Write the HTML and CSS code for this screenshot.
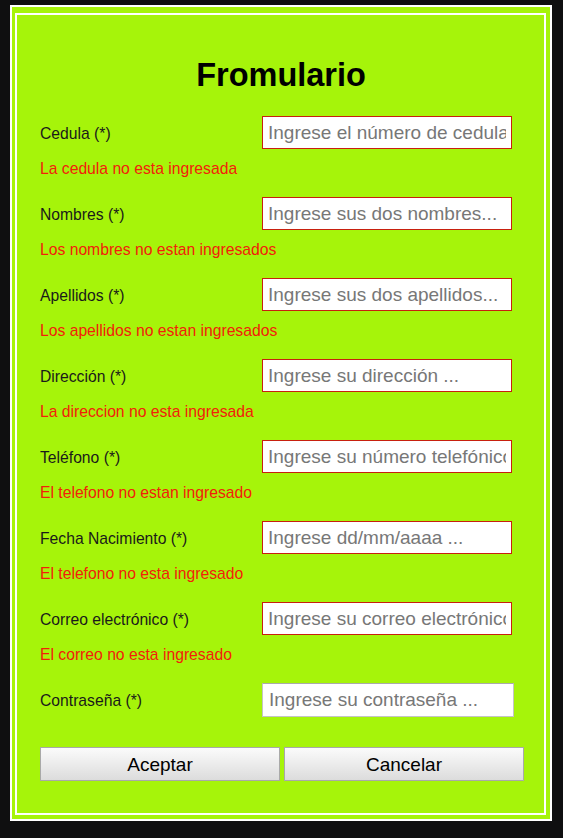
FILE: index.html
```html
<!DOCTYPE html>
<html lang="es">
<head>
<meta charset="utf-8">
<title>Fromulario</title>
<link rel="stylesheet" href="styles.css">
</head>
<body>
<div class="frame">
  <form class="panel">
    <h1 class="title">Fromulario</h1>

    <div class="field">
      <div class="row"><label class="lbl">Cedula (*)</label><input class="inp" type="text" placeholder="Ingrese el número de cedula"></div>
      <div class="err">La cedula no esta ingresada</div>
    </div>
    <div class="field">
      <div class="row"><label class="lbl">Nombres (*)</label><input class="inp" type="text" placeholder="Ingrese sus dos nombres..."></div>
      <div class="err">Los nombres no estan ingresados</div>
    </div>
    <div class="field">
      <div class="row"><label class="lbl">Apellidos (*)</label><input class="inp" type="text" placeholder="Ingrese sus dos apellidos..."></div>
      <div class="err">Los apellidos no estan ingresados</div>
    </div>
    <div class="field">
      <div class="row"><label class="lbl">Dirección (*)</label><input class="inp" type="text" placeholder="Ingrese su dirección ..."></div>
      <div class="err">La direccion no esta ingresada</div>
    </div>
    <div class="field">
      <div class="row"><label class="lbl">Teléfono (*)</label><input class="inp" type="text" placeholder="Ingrese su número telefónico"></div>
      <div class="err">El telefono no estan ingresado</div>
    </div>
    <div class="field">
      <div class="row"><label class="lbl">Fecha Nacimiento (*)</label><input class="inp" type="text" placeholder="Ingrese dd/mm/aaaa ..."></div>
      <div class="err">El telefono no esta ingresado</div>
    </div>
    <div class="field">
      <div class="row"><label class="lbl">Correo electrónico (*)</label><input class="inp" type="text" placeholder="Ingrese su correo electrónico"></div>
      <div class="err">El correo no esta ingresado</div>
    </div>
    <div class="row row-pass"><label class="lbl">Contraseña (*)</label><input class="inp inp-pass" type="password" placeholder="Ingrese su contraseña ..."></div>

    <div class="buttons">
      <button type="button" class="btn">Aceptar</button>
      <button type="button" class="btn">Cancelar</button>
    </div>
  </form>
</div>
</body>
</html>
```

FILE: styles.css
```css
html, body {
  margin: 0;
  padding: 0;
  background: #0f0f10;
}
body {
  padding: 5px 11px 0 10px;
  font-family: "Liberation Sans", Arial, sans-serif;
}
.frame {
  box-sizing: border-box;
  height: 816px;
  border: 2px solid #ffffff;
  background: #a6f40a;
  padding: 6px 4px 4px 3px;
}
.panel {
  box-sizing: border-box;
  height: 100%;
  border: 2px solid #ffffff;
  background: #a6f40a;
  padding: 42px 0 0 23px;
  margin: 0;
}
.title {
  margin: 0 22px 22px 0;
  text-align: center;
  font-size: 32.5px;
  line-height: 37px;
  font-weight: bold;
  color: #000;
}
.row {
  display: grid;
  grid-template-columns: 222px 250px;
  align-items: center;
  height: 33px;
}
.lbl {
  font-size: 15.7px;
  padding-top: 2px;
  color: #1a1a1a;
}
.inp {
  box-sizing: border-box;
  width: 250px;
  height: 33px;
  margin: 0;
  padding: 0 5px;
  border: 1px solid #c8200e;
  background: #fff;
  font-family: "Liberation Sans", Arial, sans-serif;
  font-size: 19px;
  color: #333;
  outline: none;
}
.inp::placeholder {
  color: #777;
}
.err {
  margin: 11px 0 19px;
  font-size: 15.7px;
  line-height: 18px;
  color: #f2200a;
}
.row-pass {
  grid-template-columns: 222px 252px;
  height: 34px;
}
.inp-pass {
  width: 252px;
  height: 34px;
  padding: 0 6px;
  border: 1px solid #c4c4c4;
  border-top-color: #aaa;
}
.buttons {
  display: grid;
  grid-template-columns: 240px 240px;
  column-gap: 4px;
  margin-top: 30px;
}
.btn {
  box-sizing: border-box;
  height: 34px;
  margin: 0;
  border: 1px solid #a9a9a9;
  background: linear-gradient(#fbfbfb, #dcdcdc);
  font-family: "Liberation Sans", Arial, sans-serif;
  font-size: 19px;
  color: #000;
  padding: 2px 0 0;
}
```
